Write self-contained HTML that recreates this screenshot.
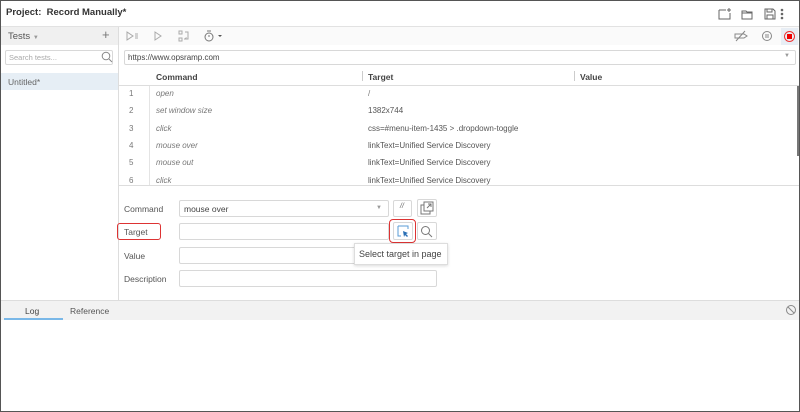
<!DOCTYPE html><html><head><style>
*{box-sizing:border-box;margin:0;padding:0}
body{width:800px;height:412px;overflow:hidden;font-family:"Liberation Sans",sans-serif;font-size:8px;color:#333;background:#fff;position:relative}
.a{position:absolute}
.frame{left:0;top:0;width:800px;height:412px;border:1px solid #555;z-index:10;pointer-events:none}
.inp{position:absolute;border:1px solid #d8d8d8;background:#fff;border-radius:2px}
.row{position:absolute;left:119px;width:677px;height:17px;color:#777;font-size:8px}
.row span{position:absolute;top:4px}
.lbl{position:absolute;left:124px;color:#555;font-size:8.5px}
</style></head><body>
<div class="a frame"></div>
<div class="a" style="left:6px;top:7px;font-size:9.5px;font-weight:bold;color:#333">Project:&nbsp; Record Manually*</div>
<div class="a" style="left:0;top:26px;width:800px;height:1px;background:#e2e2e2"></div>
<svg class="a" style="left:718px;top:7px" width="80" height="14" fill="none" stroke="#666" stroke-width="1">
<path d="M1 3h7M1 3v9h11V6M11 1v4M9 3h4"/>
<path d="M24 4h4l1 1h5v7H24zM24 6h10"/>
<path d="M47 2h8l2 2v8H47zM49 2v3h5V2M49 12V8h6v4"/>
<circle cx="64" cy="3" r=".8" fill="#666"/><circle cx="64" cy="7" r=".8" fill="#666"/><circle cx="64" cy="11" r=".8" fill="#666"/>
</svg>
<div class="a" style="left:0;top:27px;width:118px;height:18px;background:#f0f0f0"></div>
<div class="a" style="left:8px;top:31px;font-size:9.5px;color:#555">Tests <span style="font-size:6px;color:#999">▼</span></div>
<div class="a" style="left:102px;top:27px;font-size:13px;color:#777">+</div>
<div class="inp" style="left:5px;top:50px;width:108px;height:15px"></div>
<div class="a" style="left:9px;top:53px;color:#aaa;font-size:7.5px">Search tests...</div>
<svg class="a" style="left:101px;top:51px" width="12" height="12" fill="none" stroke="#888"><circle cx="5" cy="5" r="3.8"/><path d="M8 8l3 3"/></svg>
<div class="a" style="left:0;top:73px;width:118px;height:17px;background:#e6eef5"></div>
<div class="a" style="left:8px;top:77px;font-size:8.5px;color:#666">Untitled*</div>
<div class="a" style="left:118px;top:27px;width:1px;height:273px;background:#ddd"></div>
<div class="a" style="left:119px;top:27px;width:680px;height:18px;background:#fafafa"></div>
<svg class="a" style="left:125px;top:29px" width="100" height="14" fill="none" stroke="#aaa">
<path d="M2 3v8l6-4z M10 5h3M10 7h3M10 9h3"/>
<path d="M30 3v8l6-4z"/>
<rect x="54" y="2" width="3" height="3"/><rect x="54" y="9" width="3" height="3"/><path d="M60 3h3v7h-4M60 10l1.5-1.5"/>
<circle cx="84" cy="8" r="4" stroke="#777"/><path d="M84 8V6M82 2h4" stroke="#777"/><path d="M93 6h4l-2 2z" fill="#555" stroke="none"/>
</svg>
<svg class="a" style="left:733px;top:29px" width="64" height="14" fill="none" stroke="#888">
<path d="M2 5h9l3 2-3 2H2zM3 12L12 2"/>
<circle cx="34" cy="7" r="4.5"/><path d="M33 5v4M35 5v4"/>
</svg>
<div class="a" style="left:781px;top:28px;width:17px;height:17px;background:#e8eef5"></div>
<div class="a" style="left:784px;top:31px;width:11px;height:11px;border:1px solid #e33;border-radius:50%"></div>
<div class="a" style="left:787px;top:34px;width:5px;height:5px;background:#e00"></div>
<div class="inp" style="left:124px;top:50px;width:672px;height:15px"></div>
<div class="a" style="left:128px;top:53px;font-size:8px;color:#444">https://www.opsramp.com</div>
<div class="a" style="left:784px;top:53px;font-size:6px;color:#999">▼</div>
<div class="a" style="left:119px;top:85px;width:680px;height:1px;background:#ddd"></div>
<div class="a" style="left:156px;top:72px;font-weight:bold;font-size:8.5px;color:#444">Command</div>
<div class="a" style="left:362px;top:71px;width:1px;height:10px;background:#ccc"></div>
<div class="a" style="left:368px;top:72px;font-weight:bold;font-size:8.5px;color:#444">Target</div>
<div class="a" style="left:574px;top:71px;width:1px;height:10px;background:#ccc"></div>
<div class="a" style="left:580px;top:72px;font-weight:bold;font-size:8.5px;color:#444">Value</div>
<div class="a" style="left:149px;top:86px;width:1px;height:100px;background:#e4e4e4"></div>
<div class="a" style="left:797px;top:86px;width:2px;height:70px;background:#777"></div>
<div class="row" style="top:85px"><span style="left:10px">1</span><span style="left:37px;font-style:italic">open</span><span style="left:249px">/</span></div>
<div class="row" style="top:102px"><span style="left:10px">2</span><span style="left:37px;font-style:italic">set window size</span><span style="left:249px;color:#555">1382x744</span></div>
<div class="row" style="top:120px"><span style="left:10px">3</span><span style="left:37px;font-style:italic">click</span><span style="left:249px;color:#555">css=#menu-item-1435 &gt; .dropdown-toggle</span></div>
<div class="row" style="top:137px"><span style="left:10px">4</span><span style="left:37px;font-style:italic">mouse over</span><span style="left:249px;color:#555">linkText=Unified Service Discovery</span></div>
<div class="row" style="top:154px"><span style="left:10px">5</span><span style="left:37px;font-style:italic">mouse out</span><span style="left:249px;color:#555">linkText=Unified Service Discovery</span></div>
<div class="row" style="top:172px"><span style="left:10px">6</span><span style="left:37px;font-style:italic">click</span><span style="left:249px;color:#555">linkText=Unified Service Discovery</span></div>
<div class="a" style="left:119px;top:185px;width:680px;height:1px;background:#ddd"></div>
<div class="lbl" style="top:204px">Command</div>
<div class="inp" style="left:179px;top:200px;width:210px;height:17px"></div>
<div class="a" style="left:184px;top:204px;font-size:8.5px;color:#444">mouse over</div>
<div class="a" style="left:376px;top:205px;font-size:6px;color:#999">▼</div>
<div class="inp" style="left:393px;top:200px;width:19px;height:17px"></div>
<div class="a" style="left:400px;top:203px;font-size:7px;color:#666;font-style:italic">//</div>
<div class="inp" style="left:417px;top:199px;width:20px;height:18px"></div>
<svg class="a" style="left:420px;top:201px" width="14" height="14" fill="none" stroke="#777"><rect x="1" y="4" width="9" height="9"/><rect x="4" y="1" width="9" height="9" fill="#fff"/><path d="M7 7l4-4M8 3h3v3"/></svg>
<div class="lbl" style="top:227px">Target</div>
<div class="a" style="left:117px;top:223px;width:44px;height:17px;border:1.5px solid #d33;border-radius:3px"></div>
<div class="inp" style="left:179px;top:223px;width:210px;height:17px"></div>
<div class="inp" style="left:393px;top:222px;width:20px;height:18px"></div>
<div class="a" style="left:389px;top:219px;width:27px;height:24px;border:1.5px solid #d33;border-radius:4px"></div>
<svg class="a" style="left:396px;top:224px" width="14" height="14" fill="none"><path d="M2 2h10v3M2 2v10h3" stroke="#5a9bd5"/><path d="M7 7l5 2-2 1 2 2-1 1-2-2-1 2z" fill="#2a6fb5"/></svg>
<div class="inp" style="left:417px;top:222px;width:20px;height:18px"></div>
<svg class="a" style="left:420px;top:225px" width="13" height="13" fill="none" stroke="#777"><circle cx="5.5" cy="5.5" r="4"/><path d="M8.5 8.5l3.5 3.5"/></svg>
<div class="lbl" style="top:251px">Value</div>
<div class="inp" style="left:179px;top:247px;width:200px;height:17px"></div>
<div class="a" style="left:354px;top:243px;width:94px;height:22px;background:#fff;border:1px solid #ddd;box-shadow:0 1px 3px rgba(0,0,0,.15);font-size:9px;color:#444;padding:5px 0 0 4px;white-space:nowrap">Select target in page</div>
<div class="lbl" style="top:274px">Description</div>
<div class="inp" style="left:179px;top:270px;width:258px;height:17px"></div>
<div class="a" style="left:0;top:300px;width:800px;height:1px;background:#ddd"></div>
<div class="a" style="left:0;top:301px;width:800px;height:19px;background:#f2f2f2"></div>
<div class="a" style="left:25px;top:306px;font-size:8.5px;color:#444">Log</div>
<div class="a" style="left:4px;top:318px;width:59px;height:2px;background:#7ab8e8"></div>
<div class="a" style="left:70px;top:306px;font-size:8.5px;color:#555">Reference</div>
<svg class="a" style="left:785px;top:304px" width="12" height="12" fill="none" stroke="#888"><circle cx="6" cy="6" r="4.5"/><path d="M3 3l6 6"/></svg>
</body></html>
